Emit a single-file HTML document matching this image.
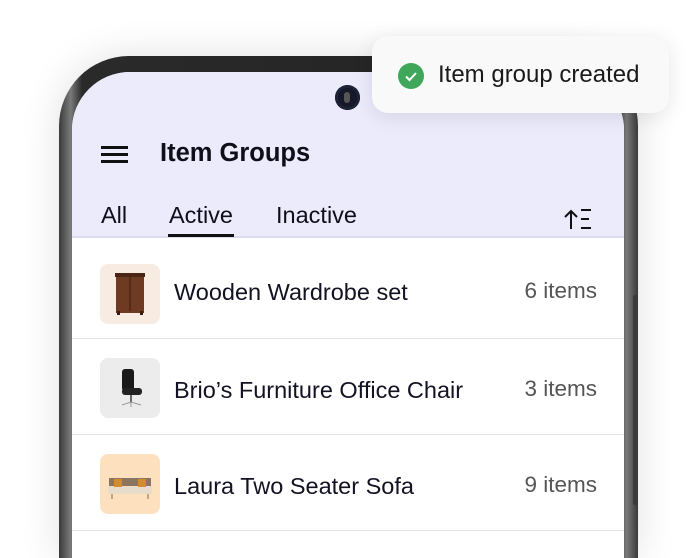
<!DOCTYPE html>
<html><head><meta charset="utf-8"><style>
*{margin:0;padding:0;box-sizing:border-box}
html,body{width:696px;height:558px;overflow:hidden}
body{background:#fff;font-family:"Liberation Sans",sans-serif;position:relative}
.frame{position:absolute;left:59px;top:56px;width:579px;height:502px;border-radius:70px 70px 0 0;background:linear-gradient(90deg,#3a3a3a,#7a7a7a 2%,#2a2a2a 4%,#222 96%,#7a7a7a 98%,#3a3a3a);box-shadow:0 0 40px rgba(0,0,0,.12)}
.btn{position:absolute;left:633px;top:295px;width:5px;height:210px;background:#3a3a3a;border-radius:2px}
.screen{position:absolute;left:72px;top:72px;width:552px;height:486px;border-radius:58px 58px 0 0;background:#fff;overflow:hidden}
.head{position:absolute;left:0;top:0;width:552px;height:166px;background:#ebebfc;border-bottom:2px solid #dcdcef}
.cam{position:absolute;left:263px;top:13px;width:25px;height:25px;border-radius:50%;background:#141828;box-shadow:inset 0 0 0 3px #1d2235}
.cam:after{content:"";position:absolute;left:9px;top:7px;width:6px;height:11px;border-radius:3px;background:#555}
.t{position:absolute;color:#0f0f1a;white-space:nowrap}
.row{position:absolute;left:0;width:552px;height:96px;border-bottom:1.5px solid #e2e2f0}
.thumb{position:absolute;left:28px;top:21px;width:60px;height:60px;border-radius:8px}
.name{position:absolute;left:102px;font-size:23.5px;color:#121222}
.cnt{position:absolute;right:27px;font-size:22.5px;color:#555}
.toast{position:absolute;left:372px;top:36px;width:297px;height:77px;border-radius:16px;background:#f9f9f9;box-shadow:0 4px 20px rgba(0,0,0,.1)}
</style></head><body>
<div class="frame"></div>
<div class="btn"></div>
<div class="screen">
 <div class="head">
  <div class="cam"></div>
  <div style="position:absolute;left:29px;top:74px;width:27px;height:3px;background:#111;box-shadow:0 7px 0 #111,0 14px 0 #111"></div>
  <div class="t" style="left:88px;top:67px;font-size:25.5px;font-weight:bold">Item Groups</div>
  <div class="t" style="left:29px;top:130px;font-size:23.5px">All</div>
  <div class="t" style="left:97px;top:130px;font-size:23.5px">Active</div>
  <div style="position:absolute;left:96px;top:162px;width:66px;height:3px;background:#111"></div>
  <div class="t" style="left:204px;top:130px;font-size:23.5px">Inactive</div>
  <svg style="position:absolute;left:491px;top:135px" width="32" height="24" viewBox="0 0 32 24" fill="none" stroke="#111" stroke-width="2"><path d="M8 22V4M2 10l6-6 6 6M18 3h10M18 12h8M18 21h10"/></svg>
 </div>
 <div class="row" style="top:171px">
  <div class="thumb" style="background:#f8ebe2"><svg width="60" height="60"><rect x="16" y="11" width="28" height="38" fill="#6e3a22"/><rect x="15" y="9" width="30" height="4" fill="#4a2515"/><line x1="30" y1="13" x2="30" y2="47" stroke="#3a1c10"/><rect x="17" y="47" width="3" height="4" fill="#3a1c10"/><rect x="40" y="47" width="3" height="4" fill="#3a1c10"/></svg></div>
  <div class="name" style="top:36px">Wooden Wardrobe set</div>
  <div class="cnt" style="top:35px">6 items</div>
 </div>
 <div class="row" style="top:267px">
  <div class="thumb" style="top:19px;background:#ececec"><svg width="60" height="60"><rect x="22" y="11" width="12" height="22" rx="3" fill="#1a1a1a"/><rect x="22" y="30" width="20" height="7" rx="3" fill="#222"/><line x1="31" y1="37" x2="31" y2="44" stroke="#666" stroke-width="2"/><path d="M22 47l9-3 10 3M31 44v5" stroke="#999" fill="none"/></svg></div>
  <div class="name" style="top:38px">Brio’s Furniture Office Chair</div>
  <div class="cnt" style="top:37px">3 items</div>
 </div>
 <div class="row" style="top:363px">
  <div class="thumb" style="top:19px;background:#fde1bf"><svg width="60" height="60"><rect x="9" y="24" width="42" height="10" fill="#8a7560"/><rect x="8" y="32" width="44" height="8" rx="2" fill="#e8dccb"/><rect x="14" y="25" width="8" height="8" fill="#d68a2a"/><rect x="38" y="25" width="8" height="8" fill="#d68a2a"/><line x1="12" y1="40" x2="12" y2="45" stroke="#8a6a40"/><line x1="48" y1="40" x2="48" y2="45" stroke="#8a6a40"/></svg></div>
  <div class="name" style="top:38px">Laura Two Seater Sofa</div>
  <div class="cnt" style="top:37px">9 items</div>
 </div>
</div>
<div class="toast">
 <svg style="position:absolute;left:26px;top:27px" width="26" height="26"><circle cx="13" cy="13" r="13" fill="#3fa65a"/><path d="M8 13.5l3.5 3.5 6.5-7" stroke="#fff" stroke-width="2" fill="none"/></svg>
 <div class="t" style="left:66px;top:25px;font-size:24px;color:#1a1a1a">Item group created</div>
</div>
</body></html>
